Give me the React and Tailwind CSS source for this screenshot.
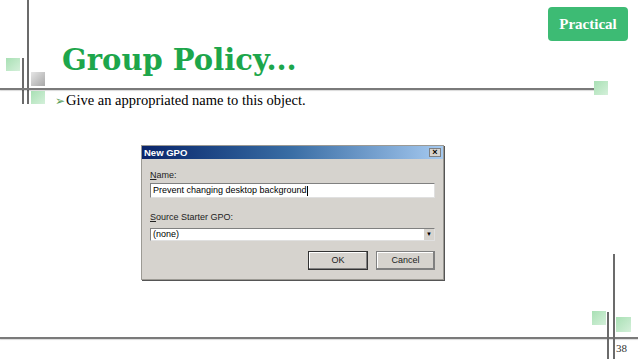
export default function App() {
  return (
    <div className="relative w-[638px] h-[359px] bg-white overflow-hidden" style={{ fontFamily: '"Liberation Serif", serif' }}>
      {/* decorative lines */}
      <div className="absolute left-[27px] top-0 w-[2px] h-[104px] bg-[#6b6b6b]" />
      <div className="absolute left-[22px] top-[58px] w-[2px] h-[46px] bg-[#6b6b6b]" />
      <div className="absolute left-0 top-[88px] w-[596px] h-[2px] bg-[#7a7a7a] shadow-[0_1px_1px_rgba(0,0,0,0.15)]" />
      <div className="absolute left-[6px] top-[58px] w-[14px] h-[13px] bg-gradient-to-br from-[#a8e0b4] to-[#d4f0da]" />
      <div className="absolute left-[31px] top-[72px] w-[14px] h-[14px] bg-gradient-to-br from-[#e6e6e6] to-[#a8a8a8]" />
      <div className="absolute left-[31px] top-[91px] w-[14px] h-[13px] bg-gradient-to-br from-[#a8e0b4] to-[#d4f0da]" />
      <div className="absolute left-[594px] top-[81px] w-[14px] h-[14px] bg-gradient-to-br from-[#a8e0b4] to-[#d4f0da]" />

      <div className="absolute left-0 top-[337px] w-[638px] h-[2px] bg-[#7a7a7a] shadow-[0_1px_1px_rgba(0,0,0,0.15)]" />
      <div className="absolute left-[613px] top-[254px] w-[2px] h-[105px] bg-[#6b6b6b]" />
      <div className="absolute left-[607px] top-[312px] w-[2px] h-[47px] bg-[#6b6b6b]" />
      <div className="absolute left-[592px] top-[311px] w-[14px] h-[14px] bg-gradient-to-br from-[#a8e0b4] to-[#d4f0da]" />
      <div className="absolute left-[616px] top-[317px] w-[15px] h-[15px] bg-gradient-to-br from-[#a8e0b4] to-[#d4f0da]" />
      <div className="absolute left-[616px] top-[340px] text-[11px] text-[#333]">38</div>

      {/* badge */}
      <div className="absolute left-[548px] top-[7px] w-[80px] h-[34px] rounded-[4px] bg-[#3dbb74] flex items-center justify-center text-white font-bold text-[15px]">
        Practical
      </div>

      {/* content */}
      <div className="flex flex-col pl-[55px] pt-[40px]">
        <div className="pl-[7px] h-[48px] text-[#1da64b] font-bold text-[29px] leading-[40px]" style={{ fontFamily: '"DejaVu Serif", serif' }}>
          Group Policy...
        </div>
        <div className="flex items-center h-[26px] text-[14.5px] text-black">
          <span className="text-[#5aa05a] text-[12px] mr-[1px]">➢</span>
          <span>Give an appropriated name to this object.</span>
        </div>

        <div className="ml-[86px] mt-[31px] w-[303px] h-[135px] bg-[#d6d3ce] border border-[#9c9a94] shadow-[1px_1px_0_#555] flex flex-col" style={{ fontFamily: '"Liberation Sans", sans-serif' }}>
          <div className="h-[13px] flex items-center justify-between pl-[2px] pr-[2px] bg-gradient-to-r from-[#0a246a] via-[#3a6ea5] to-[#a6caf0]">
            <span className="text-white font-bold text-[9.5px] leading-none">New GPO</span>
            <span className="w-[12px] h-[9px] bg-[#d6d3ce] border border-[#808080] flex items-center justify-center text-[9px] font-bold leading-none text-black">×</span>
          </div>
          <div className="flex flex-col px-[8px] pt-[9px] text-[9px] text-[#222]">
            <span className="leading-[14px]"><span className="underline">N</span>ame:</span>
            <div className="mt-[1px] h-[15px] bg-white border border-[#808080] border-r-[#e0e0e0] border-b-[#e0e0e0] flex items-center px-[2px] text-black">
              Prevent changing desktop background<span className="w-[1px] h-[10px] bg-black" />
            </div>
            <span className="mt-[12px] leading-[14px]"><span className="underline">S</span>ource Starter GPO:</span>
            <div className="mt-[4px] h-[13px] bg-white border border-[#808080] border-r-[#e0e0e0] border-b-[#e0e0e0] flex items-center justify-between pl-[2px] text-black">
              <span>(none)</span>
              <span className="w-[11px] h-[11px] bg-[#d6d3ce] border-l border-[#fff] flex items-center justify-center text-[6px]">▼</span>
            </div>
            <div className="flex justify-end gap-[8px] mt-[10px]">
              <div className="w-[60px] h-[19px] border border-[#333] bg-[#d6d3ce] flex items-center justify-center shadow-[inset_-1px_-1px_0_#808080,inset_1px_1px_0_#fff]">OK</div>
              <div className="w-[59px] h-[19px] border border-[#808080] bg-[#d6d3ce] flex items-center justify-center shadow-[inset_-1px_-1px_0_#808080,inset_1px_1px_0_#fff]">Cancel</div>
            </div>
          </div>
        </div>
      </div>
    </div>
  );
}
